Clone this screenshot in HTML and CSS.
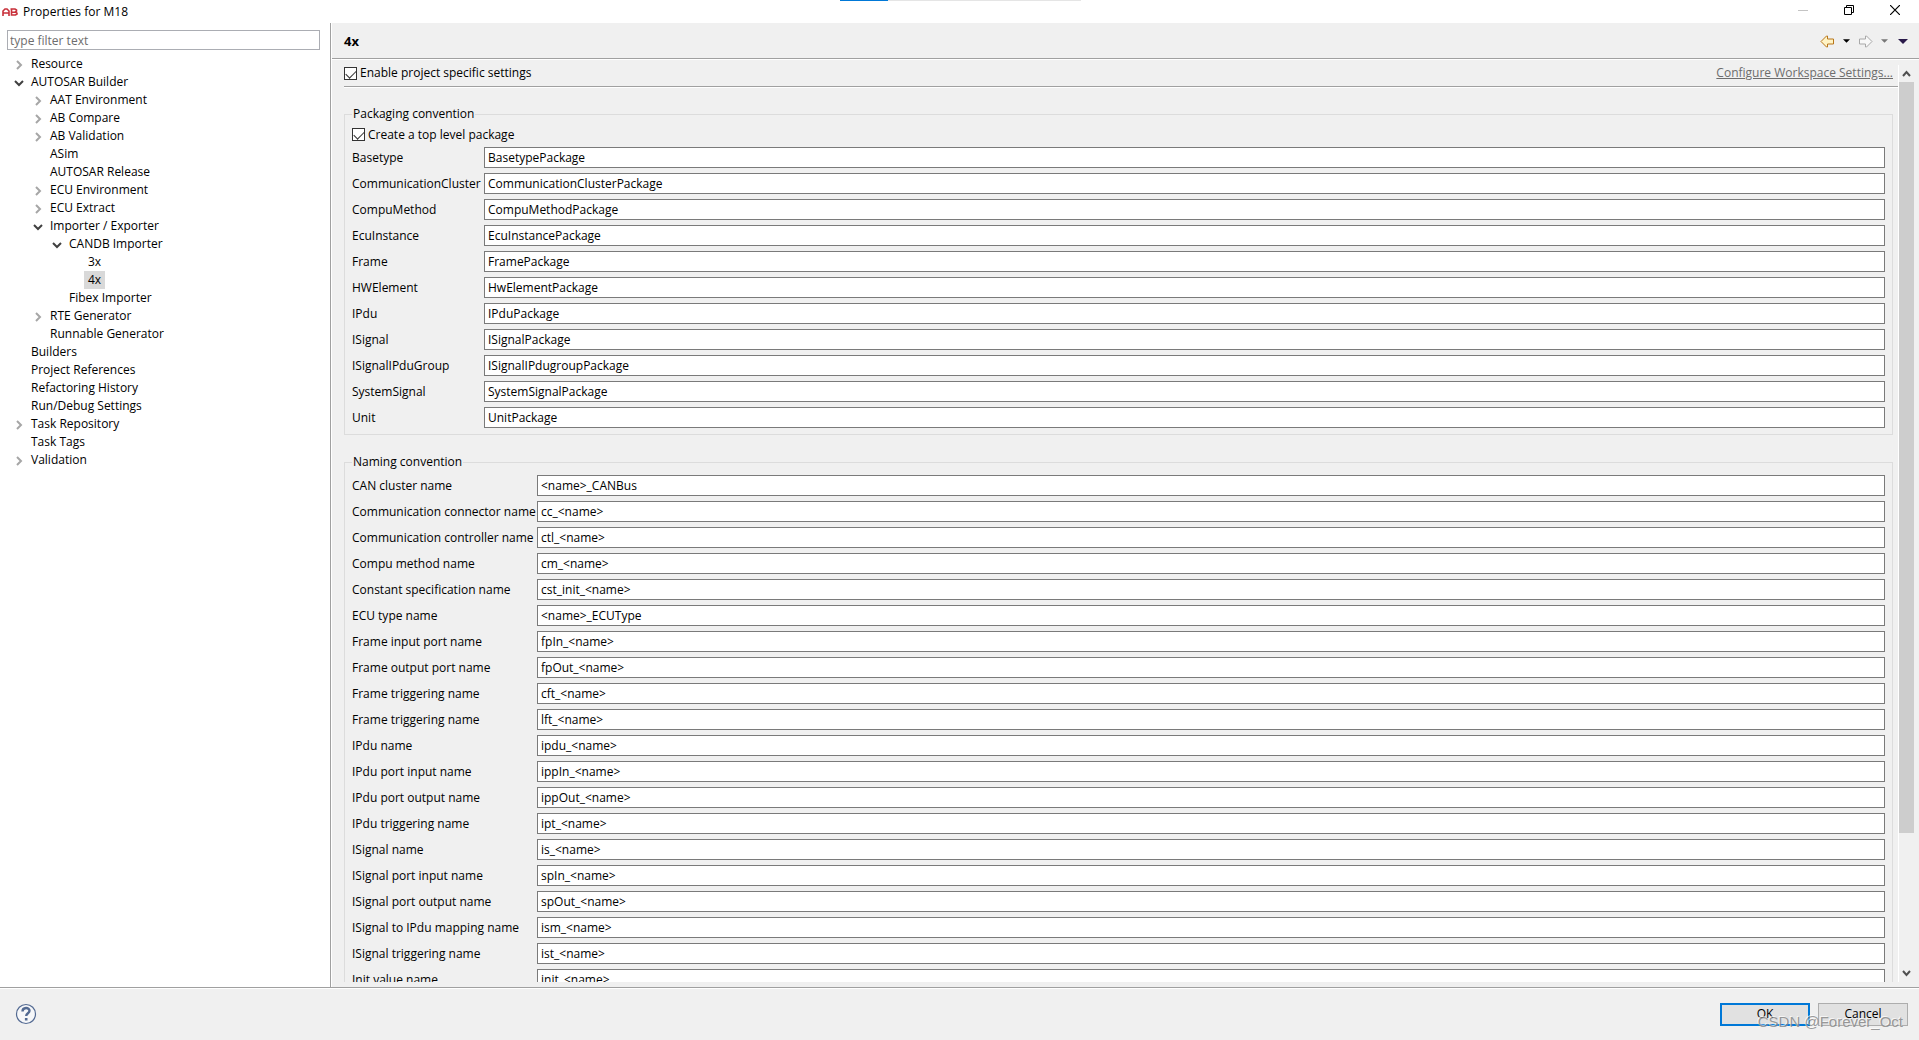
FILE: index.html
```
<!doctype html>
<html lang="en">
<head>
    <meta charset="utf-8">
    <title>Properties for M18</title>
    <link rel="stylesheet" href="styles.css">
</head>

<body>
    <!-- shared arrows -->
    <svg class="defs" aria-hidden="true">
        <symbol id="closed" viewBox="0 0 10 10"><path d="M3 1l4 4-4 4" fill="none" stroke="#a6a6a6" stroke-width="2"/></symbol>
        <symbol id="open" viewBox="0 0 10 10"><path d="M1 3l4 4 4-4" fill="none" stroke="#404040" stroke-width="2"/></symbol>
        <symbol id="left" viewBox="0 0 15 13"><path d="M1 6.500L6.500 1h1v3h6v5h-6v3h-1z"/></symbol>
        <symbol id="right" viewBox="0 0 15 13"><path d="M14 6.500L8.500 1h-1v3h-6v5h6v3h1z"/></symbol>
        <symbol id="drop" viewBox="0 0 8 4"><path d="M0 0h8L4 4z"/></symbol>
    </svg>

    <div class="titlebar">
        <svg class="logo" width="16" height="8" viewBox="0 0 16 8" fill="none" stroke="#c8303a" stroke-width="1.600"><path d="M1 8V3l2-2h2l2 2v5M1 5h6M8.500 1H13l1.500 1v1L13 4.200H9.500M9.500 1v6H13.500l1.500-1V5.200l-1.500-1"/></svg>
        <span class="title">Properties for M18</span>
        <div class="progress"><div class="bar"></div></div>
        <div class="winbuttons">
            <button aria-label="Minimize"><svg width="10" height="10"><path d="M0 5.500h10" stroke="#c4c4c4"/></svg></button>
            <button aria-label="Restore"><svg width="10" height="10" fill="none" stroke="#000"><path d="M.5 2.500h7v7h-7zM2.500 2.500v-2h7v7h-2"/></svg></button>
            <button aria-label="Close"><svg width="10" height="10"><path d="M0 0l10 10M10 0L0 10" stroke="#000" stroke-width="1.200"/></svg></button>
        </div>
    </div>

    <div class="main">
        <div class="sidebar">
            <input class="filter" type="text" placeholder="type filter text" aria-label="Filter">
            <ul class="tree">
                <li><button aria-label="Expand"><svg><use href="#closed"/></svg></button><span>Resource</span></li>
                <li><button aria-label="Collapse"><svg><use href="#open"/></svg></button><span>AUTOSAR Builder</span>
                    <ul>
                        <li><button aria-label="Expand"><svg><use href="#closed"/></svg></button><span>AAT Environment</span></li>
                        <li><button aria-label="Expand"><svg><use href="#closed"/></svg></button><span>AB Compare</span></li>
                        <li><button aria-label="Expand"><svg><use href="#closed"/></svg></button><span>AB Validation</span></li>
                        <li class="leaf"><span>ASim</span></li>
                        <li class="leaf"><span>AUTOSAR Release</span></li>
                        <li><button aria-label="Expand"><svg><use href="#closed"/></svg></button><span>ECU Environment</span></li>
                        <li><button aria-label="Expand"><svg><use href="#closed"/></svg></button><span>ECU Extract</span></li>
                        <li><button aria-label="Collapse"><svg><use href="#open"/></svg></button><span>Importer / Exporter</span>
                            <ul>
                                <li><button aria-label="Collapse"><svg><use href="#open"/></svg></button><span>CANDB Importer</span>
                                    <ul>
                                        <li class="leaf"><span>3x</span></li>
                                        <li class="leaf"><span class="selected">4x</span></li>
                                    </ul>
                                </li>
                                <li class="leaf"><span>Fibex Importer</span></li>
                            </ul>
                        </li>
                        <li><button aria-label="Expand"><svg><use href="#closed"/></svg></button><span>RTE Generator</span></li>
                        <li class="leaf"><span>Runnable Generator</span></li>
                    </ul>
                </li>
                <li class="leaf"><span>Builders</span></li>
                <li class="leaf"><span>Project References</span></li>
                <li class="leaf"><span>Refactoring History</span></li>
                <li class="leaf"><span>Run/Debug Settings</span></li>
                <li><button aria-label="Expand"><svg><use href="#closed"/></svg></button><span>Task Repository</span></li>
                <li class="leaf"><span>Task Tags</span></li>
                <li><button aria-label="Expand"><svg><use href="#closed"/></svg></button><span>Validation</span></li>
            </ul>
        </div>

        <div class="content">
            <div class="header">
                <h1>4x</h1>
                <div class="nav">
                    <button class="back" aria-label="Back"><svg width="15" height="13"><use href="#left"/></svg></button>
                    <button aria-label="Back history"><svg width="7" height="4"><use href="#drop"/></svg></button>
                    <button class="forward" aria-label="Forward"><svg width="15" height="13"><use href="#right"/></svg></button>
                    <button class="dim" aria-label="Forward history"><svg width="7" height="4"><use href="#drop"/></svg></button>
                    <button class="menu" aria-label="Menu"><svg width="10" height="5"><use href="#drop"/></svg></button>
                </div>
            </div>

            <div class="scroll">
                <div class="page">
                    <div class="enable">
                        <label class="check"><input type="checkbox" checked>Enable project specific settings</label>
                        <a href="#">Configure Workspace Settings...</a>
                    </div>

                    <fieldset class="packaging">
                        <legend>Packaging convention</legend>
                        <label class="check"><input type="checkbox" checked>Create a top level package</label>
                        <div class="fields">
                            <label for="p1">Basetype</label><input id="p1" type="text" value="BasetypePackage">
                            <label for="p2">CommunicationCluster</label><input id="p2" type="text" value="CommunicationClusterPackage">
                            <label for="p3">CompuMethod</label><input id="p3" type="text" value="CompuMethodPackage">
                            <label for="p4">EcuInstance</label><input id="p4" type="text" value="EcuInstancePackage">
                            <label for="p5">Frame</label><input id="p5" type="text" value="FramePackage">
                            <label for="p6">HWElement</label><input id="p6" type="text" value="HwElementPackage">
                            <label for="p7">IPdu</label><input id="p7" type="text" value="IPduPackage">
                            <label for="p8">ISignal</label><input id="p8" type="text" value="ISignalPackage">
                            <label for="p9">ISignalIPduGroup</label><input id="p9" type="text" value="ISignalIPdugroupPackage">
                            <label for="p10">SystemSignal</label><input id="p10" type="text" value="SystemSignalPackage">
                            <label for="p11">Unit</label><input id="p11" type="text" value="UnitPackage">
                        </div>
                    </fieldset>

                    <fieldset class="naming">
                        <legend>Naming convention</legend>
                        <div class="fields">
                            <label for="n1">CAN cluster name</label><input id="n1" type="text" value="&lt;name&gt;_CANBus">
                            <label for="n2">Communication connector name</label><input id="n2" type="text" value="cc_&lt;name&gt;">
                            <label for="n3">Communication controller name</label><input id="n3" type="text" value="ctl_&lt;name&gt;">
                            <label for="n4">Compu method name</label><input id="n4" type="text" value="cm_&lt;name&gt;">
                            <label for="n5">Constant specification name</label><input id="n5" type="text" value="cst_init_&lt;name&gt;">
                            <label for="n6">ECU type name</label><input id="n6" type="text" value="&lt;name&gt;_ECUType">
                            <label for="n7">Frame input port name</label><input id="n7" type="text" value="fpIn_&lt;name&gt;">
                            <label for="n8">Frame output port name</label><input id="n8" type="text" value="fpOut_&lt;name&gt;">
                            <label for="n9">Frame triggering name</label><input id="n9" type="text" value="cft_&lt;name&gt;">
                            <label for="n10">Frame triggering name</label><input id="n10" type="text" value="lft_&lt;name&gt;">
                            <label for="n11">IPdu name</label><input id="n11" type="text" value="ipdu_&lt;name&gt;">
                            <label for="n12">IPdu port input name</label><input id="n12" type="text" value="ippIn_&lt;name&gt;">
                            <label for="n13">IPdu port output name</label><input id="n13" type="text" value="ippOut_&lt;name&gt;">
                            <label for="n14">IPdu triggering name</label><input id="n14" type="text" value="ipt_&lt;name&gt;">
                            <label for="n15">ISignal name</label><input id="n15" type="text" value="is_&lt;name&gt;">
                            <label for="n16">ISignal port input name</label><input id="n16" type="text" value="spIn_&lt;name&gt;">
                            <label for="n17">ISignal port output name</label><input id="n17" type="text" value="spOut_&lt;name&gt;">
                            <label for="n18">ISignal to IPdu mapping name</label><input id="n18" type="text" value="ism_&lt;name&gt;">
                            <label for="n19">ISignal triggering name</label><input id="n19" type="text" value="ist_&lt;name&gt;">
                            <label for="n20">Init value name</label><input id="n20" type="text" value="init_&lt;name&gt;">
                        </div>
                    </fieldset>
                </div>

                <div class="scrollbar">
                    <button aria-label="Scroll up"><svg width="9" height="7"><path d="M1 6l3.500-4L8 6" fill="none" stroke="#505050" stroke-width="2"/></svg></button>
                    <div class="track"><div class="thumb"></div></div>
                    <button aria-label="Scroll down"><svg width="9" height="7"><path d="M1 1l3.500 4L8 1" fill="none" stroke="#505050" stroke-width="2"/></svg></button>
                </div>
            </div>
        </div>
    </div>

    <div class="footer">
        <button class="help" aria-label="Help"><svg width="22" height="22" viewBox="0 0 22 22" fill="none" stroke="#536a92"><circle cx="11" cy="11" r="9.500" fill="#f6f7f9" stroke-width="1.200"/><path d="M7.500 8.500C7.500 4 14.500 4 14.500 7.800c0 2.500-3.300 2.400-3.300 5.200" stroke-width="2.400"/><path d="M11.200 15v2.500" stroke-width="2.600"/></svg></button>
        <button class="btn ok">OK</button>
        <button class="btn">Cancel</button>
        <span class="watermark">CSDN @Forever_Oct</span>
    </div>
</body>
</html>
```
FILE: styles.css
```
* {
  box-sizing: border-box;
}

body {
  margin: 0;
  height: 100vh;
  display: flex;
  flex-direction: column;
  background: #fff;
  color: #000;
  font: 12px/16px "Open Sans", "Noto Sans", sans-serif;
}

button, input {
  font: inherit;
  color: inherit;
}

button {
  border: 0;
  padding: 0;
  background: none;
}

svg {
  display: block;
}

.defs {
  position: absolute;
  width: 0;
  height: 0;
}

/* title bar */
.titlebar {
  position: relative;
  flex: none;
  display: flex;
  align-items: center;
  height: 23px;
  padding-left: 2px;
}

.title {
  margin-left: 5px;
}

.progress {
  position: absolute;
  top: 0;
  left: 50%;
  width: 241px;
  height: 1px;
  margin-left: -120px;
  background: #e5e5e5;
}

.bar {
  width: 20%;
  height: 1px;
  background: #0078d7;
}

.winbuttons {
  display: flex;
  align-self: flex-start;
  margin: 0 1px 0 auto;
}

.winbuttons button {
  display: flex;
  justify-content: center;
  align-items: center;
  width: 46px;
  height: 20px;
}

/* left tree */
.main {
  flex: 1;
  min-height: 0;
  display: flex;
}

.sidebar {
  flex: none;
  width: 331px;
  padding: 7px 10px 0 7px;
  border-right: 1px solid #a0a0a0;
}

.filter {
  display: block;
  width: 100%;
  height: 20px;
  padding: 0 2px;
  border: 1px solid #abadb3;
}

.filter::placeholder {
  color: #6d6d6d;
}

.tree, .tree ul {
  list-style: none;
  margin: 0;
  padding: 0;
}

.tree {
  padding: 5px 0 0 5px;
}

.tree ul {
  padding-left: 19px;
}

.tree button {
  display: inline-block;
  width: 15px;
  height: 18px;
  padding: 5px 3px 3px 2px;
  vertical-align: top;
}

.tree svg {
  width: 10px;
  height: 10px;
}

.tree span {
  display: inline-block;
  padding: 0 4px;
  line-height: 18px;
  vertical-align: top;
}

.tree .leaf {
  padding-left: 15px;
}

.tree .selected {
  background: #d9d9d9;
}

/* right side */
.content {
  flex: 1;
  min-width: 0;
  display: flex;
  flex-direction: column;
  background: #f0f0f0;
  border-left: 1px solid #fff;
}

.header {
  flex: none;
  display: flex;
  justify-content: space-between;
  align-items: center;
  height: 37px;
  padding: 0 11px 0 12px;
  border-bottom: 1px solid #fff;
  box-shadow: inset 0 -1px #a0a0a0;
}

.header h1 {
  margin: 0;
  font-size: 13px;
}

.nav {
  display: flex;
  align-items: center;
  gap: 8px;
}

.back {
  fill: #fff3c4;
  stroke: #b8761a;
}

.forward {
  fill: #f8f8f8;
  stroke: #a8a8a8;
}

.dim {
  fill: #777;
}

.menu {
  margin-left: 2px;
  fill: #2a1a4a;
}

.scroll {
  flex: 1;
  min-height: 0;
  display: flex;
  margin: 5px 5px 5px 12px;
}

.page {
  flex: 1;
  min-width: 0;
  overflow: hidden;
}

.enable {
  display: flex;
  justify-content: space-between;
  height: 23px;
  padding-right: 5px;
  border-bottom: 1px solid #fff;
  box-shadow: inset 0 -1px #a0a0a0;
}

.enable a {
  color: #6d6d6d;
}

.check {
  display: flex;
  align-items: center;
  gap: 3px;
  height: 16px;
}

.check input {
  appearance: none;
  width: 13px;
  height: 13px;
  margin: 0;
  border: 1px solid #333;
  background: #fff;
}

.check input:checked::before {
  content: "";
  display: block;
  width: 9px;
  height: 5px;
  margin: 2px 1px;
  border: solid #333;
  border-width: 0 0 1px 1px;
  transform: rotate(-45deg);
}

fieldset {
  margin: 18px 5px 19px 0;
  padding: 0 7px 6px;
  border: 1px solid #dcdcdc;
}

legend {
  padding: 0 1px;
}

.packaging .check {
  height: 25px;
}

.naming {
  padding-top: 5px;
}

.fields {
  display: grid;
  grid-template-columns: 132px 1fr;
  gap: 5px 0;
}

.naming .fields {
  grid-template-columns: 185px 1fr;
}

.fields label {
  line-height: 21px;
  white-space: nowrap;
}

.fields input {
  height: 21px;
  padding: 0 3px;
  border: 1px solid #7a7a7a;
  background: #fff;
}

.scrollbar {
  flex: none;
  display: flex;
  flex-direction: column;
  width: 16px;
  border-left: 1px solid #fff;
}

.scrollbar button {
  display: flex;
  justify-content: center;
  align-items: center;
  height: 17px;
}

.track {
  flex: 1;
}

.thumb {
  height: 85%;
  background: #cdcdcd;
}

/* bottom */
.footer {
  position: relative;
  flex: none;
  display: flex;
  align-items: center;
  gap: 8px;
  height: 53px;
  padding: 0 11px 0 15px;
  background: #f0f0f0;
  border-top: 1px solid #a0a0a0;
  box-shadow: inset 0 1px #fff;
}

.help {
  margin-right: auto;
}

.btn {
  width: 90px;
  height: 23px;
  border: 1px solid #adadad;
  background: #e1e1e1;
}

.ok {
  border: 2px solid #0078d7;
}

.watermark {
  position: absolute;
  right: 16px;
  bottom: 8px;
  font: 15px/20px "Liberation Sans", sans-serif;
  color: rgba(130, 130, 130, 0.8);
  text-shadow: -1px -1px rgba(255, 255, 255, 0.7);
}
```
